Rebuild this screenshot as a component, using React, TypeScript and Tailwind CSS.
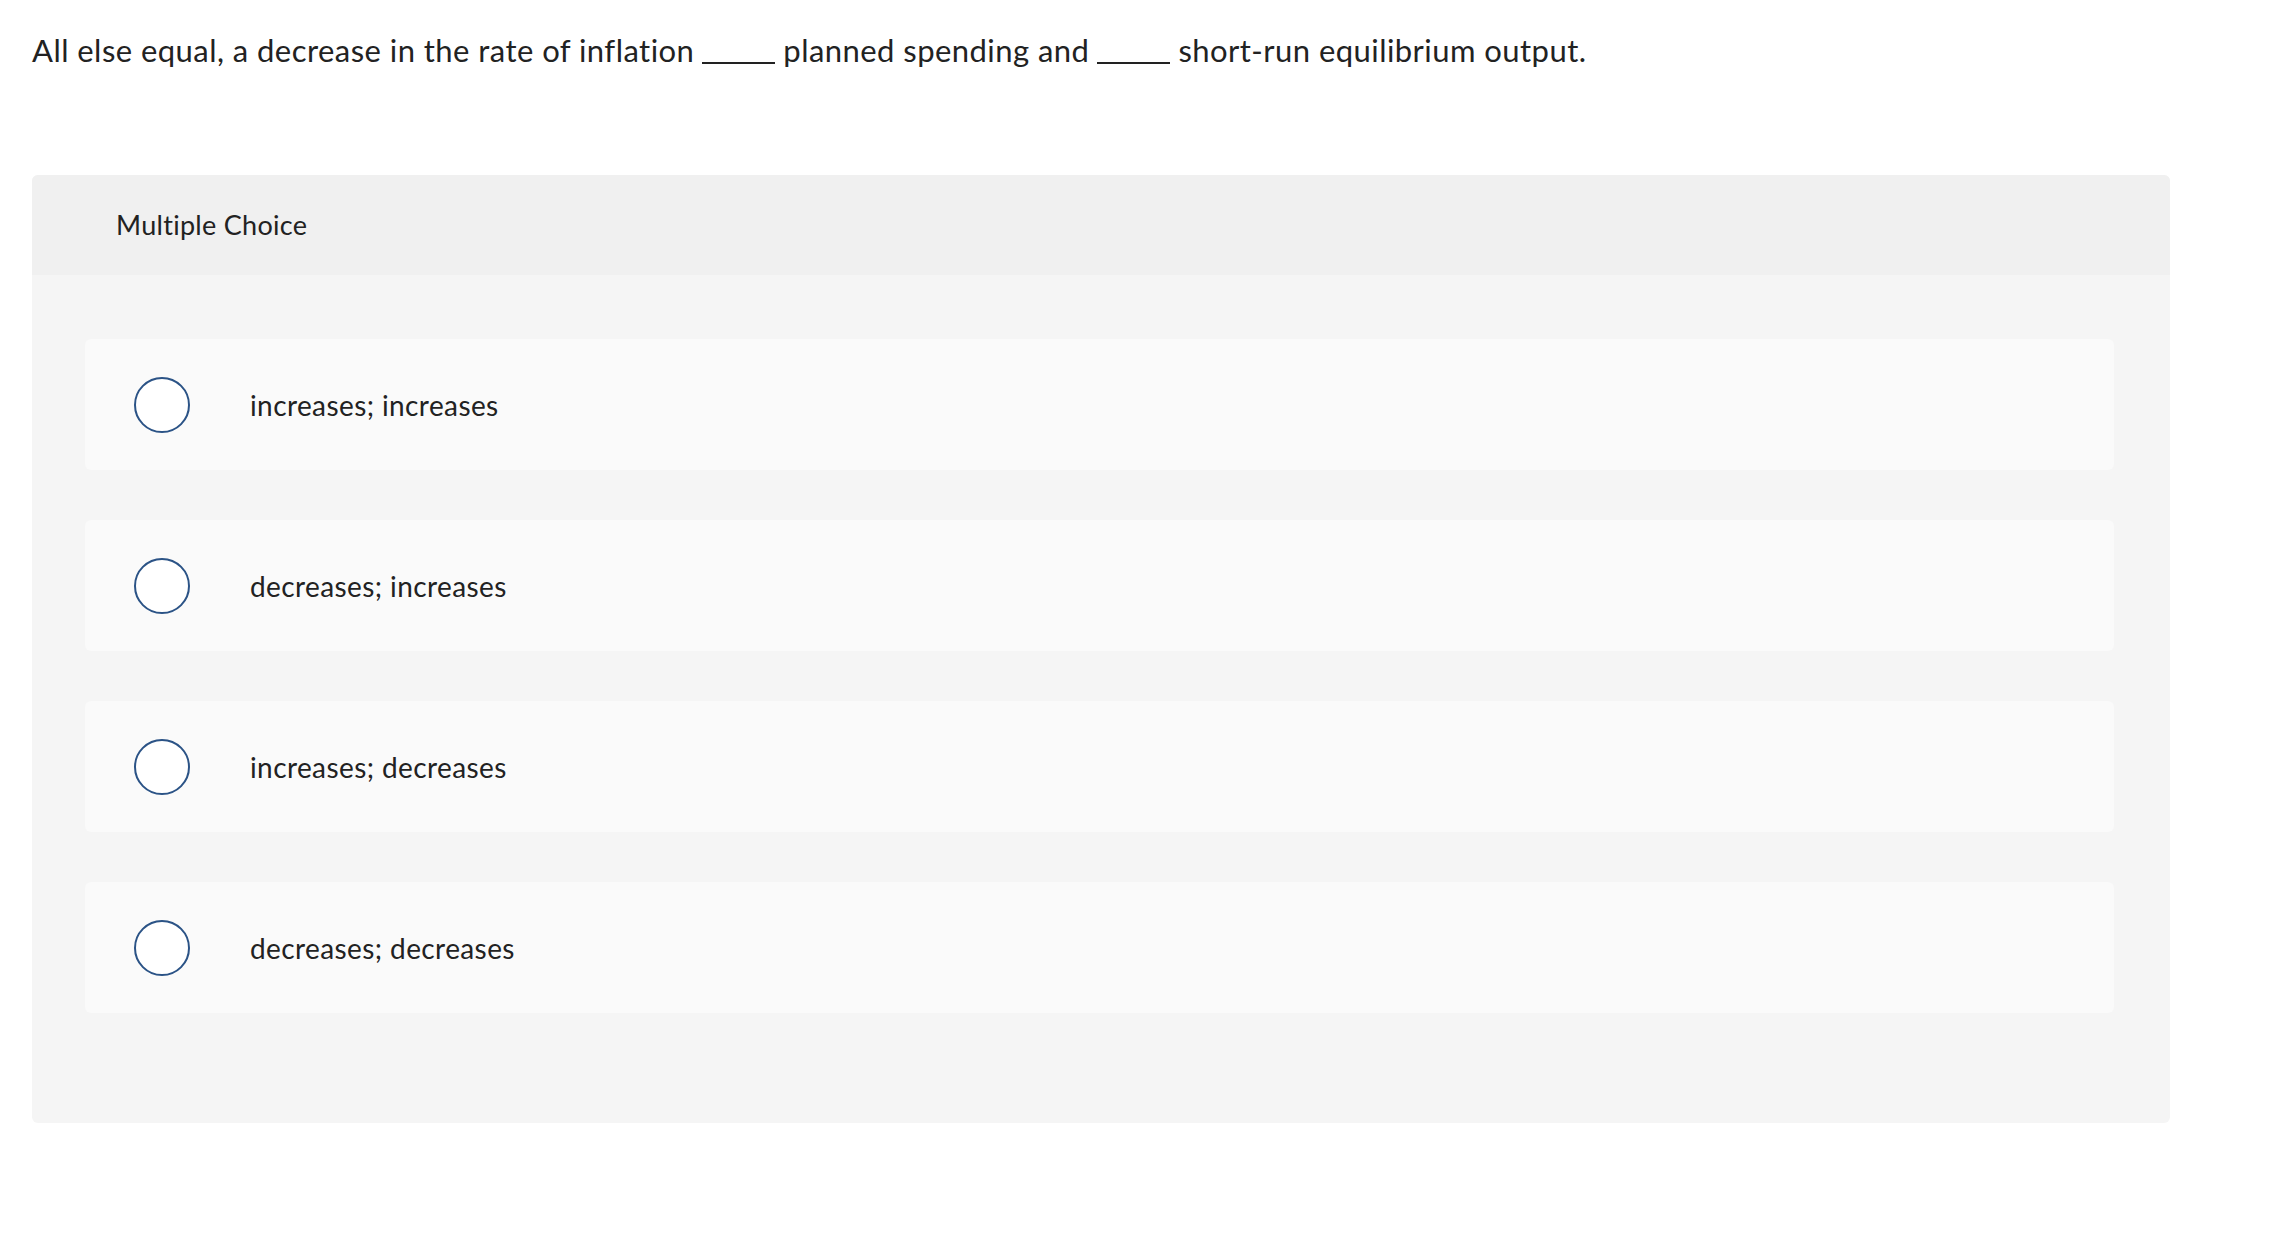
const options = [
  'increases; increases',
  'decreases; increases',
  'increases; decreases',
  'decreases; decreases',
];

const Blank = () => (
  <span className="mx-[8px] inline-block w-[73px] translate-y-[2px] border-b-2 border-[#222222] align-baseline" />
);

const App = () => {
  return (
    <div
      className="min-h-screen bg-white text-[#222222]"
      style={{ fontFamily: 'Lato, "Open Sans", Arial, sans-serif' }}
    >
      <div className="w-[2138px] ml-[32px] pt-[29px]">
        <p className="text-[31px] leading-[42px] tracking-[0.45px]">
          All else equal, a decrease in the rate of inflation
          <Blank />
          planned spending and
          <Blank />
          short-run equilibrium output.
        </p>

        <section className="mt-[104px] rounded-md bg-[#f5f5f5] pb-[110px]">
          <header className="flex h-[100px] items-center rounded-t-md bg-[#f0f0f0] pl-[84px]">
            <h2 className="text-[27px] tracking-[0.3px]">Multiple Choice</h2>
          </header>

          <div className="flex flex-col gap-[50px] px-[53px] pt-[64px] pr-[56px]">
            {options.map((label) => (
              <label
                key={label}
                className="flex h-[131px] items-center rounded-md bg-[#fafafa]"
              >
                <span className="ml-[49px] h-[56px] w-[56px] shrink-0 rounded-full border-2 border-[#2b5386] bg-white" />
                <span className="ml-[60px] text-[28px] tracking-[0.4px]">{label}</span>
              </label>
            ))}
          </div>
        </section>
      </div>
    </div>
  );
};

export default App;
